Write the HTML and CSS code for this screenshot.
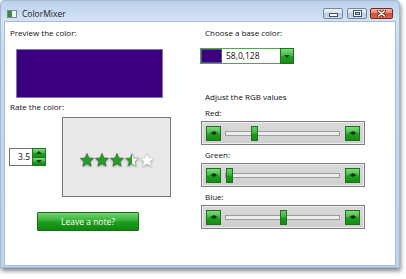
FILE: index.html
```html
<!DOCTYPE html>
<html>
<head>
<meta charset="utf-8">
<title>ColorMixer</title>
<link rel="stylesheet" href="styles.css">
</head>
<body>
<div class="window">
  <div class="titlebar">
    <svg class="app-icon" width="10" height="8" viewBox="0 0 10 8">
      <rect x="0" y="0" width="10" height="8" fill="#7d8896"/>
      <rect x="1" y="1" width="4" height="6" fill="#2f8f3c"/>
      <rect x="5" y="1" width="4" height="6" fill="#f4f6f8"/>
    </svg>
    <span class="title">ColorMixer</span>
    <div class="caption-buttons">
      <div class="cap cap-min"><span class="glyph-min"></span></div>
      <div class="cap cap-max"><span class="glyph-max"></span></div>
      <div class="cap cap-close">
        <svg width="9" height="7" viewBox="0 0 9 7">
          <path d="M1.5 1 L7.5 6 M7.5 1 L1.5 6" stroke="#5a2018" stroke-width="3" stroke-linecap="round"/>
          <path d="M1.5 1 L7.5 6 M7.5 1 L1.5 6" stroke="#ffffff" stroke-width="1.6" stroke-linecap="round"/>
        </svg>
      </div>
    </div>
  </div>
  <div class="client">
    <div class="col col-left">
      <div class="label">Preview the color:</div>
      <div class="preview" style="background-color: rgb(58,0,128);"></div>
      <div class="label label-rate">Rate the color:</div>
      <div class="rating-row">
        <div class="spin">
          <div class="spin-text">3.5</div>
          <div class="spin-btns">
            <div class="gbtn spin-btn"><span class="tri-up"></span></div>
            <div class="gbtn spin-btn"><span class="tri-down"></span></div>
          </div>
        </div>
        <div class="rating">
          <svg class="star" width="14" height="14" viewBox="0 0 14 14"><polygon class="star-full" points="7,0.5 8.85,4.95 13.66,5.34 10,8.5 11.11,13.16 7,10.65 2.89,13.16 4,8.5 0.34,5.34 5.15,4.95"/></svg>
          <svg class="star" width="14" height="14" viewBox="0 0 14 14"><polygon class="star-full" points="7,0.5 8.85,4.95 13.66,5.34 10,8.5 11.11,13.16 7,10.65 2.89,13.16 4,8.5 0.34,5.34 5.15,4.95"/></svg>
          <svg class="star" width="14" height="14" viewBox="0 0 14 14"><polygon class="star-full" points="7,0.5 8.85,4.95 13.66,5.34 10,8.5 11.11,13.16 7,10.65 2.89,13.16 4,8.5 0.34,5.34 5.15,4.95"/></svg>
          <svg class="star" width="14" height="14" viewBox="0 0 14 14">
            <defs>
              <linearGradient id="half" x1="0" y1="0" x2="1" y2="0">
                <stop offset="0.5" stop-color="#2b9b2b"/>
                <stop offset="0.5" stop-color="#ffffff"/>
              </linearGradient>
            </defs>
            <polygon class="star-half" fill="url(#half)" points="7,0.5 8.85,4.95 13.66,5.34 10,8.5 11.11,13.16 7,10.65 2.89,13.16 4,8.5 0.34,5.34 5.15,4.95"/>
          </svg>
          <svg class="star" width="14" height="14" viewBox="0 0 14 14"><polygon class="star-empty" points="7,0.5 8.85,4.95 13.66,5.34 10,8.5 11.11,13.16 7,10.65 2.89,13.16 4,8.5 0.34,5.34 5.15,4.95"/></svg>
        </div>
      </div>
      <div class="note-btn">Leave a note?</div>
    </div>
    <div class="col col-right">
      <div class="label label-r">Choose a base color:</div>
      <div class="combo">
        <div class="swatch" style="background-color: rgb(58,0,128);"></div>
        <div class="combo-text">58,0,128</div>
        <div class="gbtn combo-btn"><span class="tri-down"></span></div>
      </div>
      <div class="label label-r label-adjust">Adjust the RGB values</div>
      <div class="slider-group">
        <div class="label label-r">Red:</div>
        <div class="slider">
          <div class="gbtn rb"><svg width="8" height="4" viewBox="0 0 8 4"><path d="M0 2 H8" stroke="#1c3f1c" stroke-width="0.8"/><ellipse cx="4" cy="2" rx="2.2" ry="1.7" fill="#132a13"/></svg></div>
          <div class="track"><div class="thumb" style="left: 24.6px;"></div></div>
          <div class="gbtn rb"><svg width="8" height="4" viewBox="0 0 8 4"><path d="M0 2 H8" stroke="#1c3f1c" stroke-width="0.8"/><ellipse cx="4" cy="2" rx="2.2" ry="1.7" fill="#132a13"/></svg></div>
        </div>
      </div>
      <div class="slider-group">
        <div class="label label-r">Green:</div>
        <div class="slider">
          <div class="gbtn rb"><svg width="8" height="4" viewBox="0 0 8 4"><path d="M0 2 H8" stroke="#1c3f1c" stroke-width="0.8"/><ellipse cx="4" cy="2" rx="2.2" ry="1.7" fill="#132a13"/></svg></div>
          <div class="track"><div class="thumb" style="left: 0px;"></div></div>
          <div class="gbtn rb"><svg width="8" height="4" viewBox="0 0 8 4"><path d="M0 2 H8" stroke="#1c3f1c" stroke-width="0.8"/><ellipse cx="4" cy="2" rx="2.2" ry="1.7" fill="#132a13"/></svg></div>
        </div>
      </div>
      <div class="slider-group">
        <div class="label label-r">Blue:</div>
        <div class="slider">
          <div class="gbtn rb"><svg width="8" height="4" viewBox="0 0 8 4"><path d="M0 2 H8" stroke="#1c3f1c" stroke-width="0.8"/><ellipse cx="4" cy="2" rx="2.2" ry="1.7" fill="#132a13"/></svg></div>
          <div class="track"><div class="thumb" style="left: 54.2px;"></div></div>
          <div class="gbtn rb"><svg width="8" height="4" viewBox="0 0 8 4"><path d="M0 2 H8" stroke="#1c3f1c" stroke-width="0.8"/><ellipse cx="4" cy="2" rx="2.2" ry="1.7" fill="#132a13"/></svg></div>
        </div>
      </div>
    </div>
  </div>
</div>
</body>
</html>
```
FILE: styles.css
```css
html, body {
  margin: 0;
  padding: 0;
  background: #ffffff;
}

body {
  font-family: "Open Sans", "Noto Sans", sans-serif;
  font-size: 8px;
  color: #0e0e0e;
  width: 406px;
  height: 279px;
  overflow: hidden;
}

.window {
  width: 400px;
  height: 268px;
  display: flex;
  flex-direction: column;
  background: linear-gradient(180deg, #b9cfe9 0px, #d4e3f4 20px, #c6d9ef 60px, #bfd3eb 100%);
  border-radius: 5px 5px 0 0;
  box-shadow: 1px 3px 4px rgba(50, 55, 65, 0.6), inset 0 0 0 1px #a3b8d2;
}

.titlebar {
  height: 22px;
  box-sizing: border-box;
  padding: 5px 7px 0 7px;
  display: flex;
  align-items: center;
}

.app-icon {
  display: block;
  margin-right: 5px;
}

.title {
  flex: 1;
  font-size: 8.5px;
  color: #14202e;
}

.caption-buttons {
  display: flex;
}

.cap {
  height: 11px;
  box-sizing: border-box;
  border: 1px solid #7186a3;
  border-radius: 2px;
  display: flex;
  align-items: center;
  justify-content: center;
  background: linear-gradient(180deg, #eef3f9 0%, #d7e2ee 45%, #b9cadf 52%, #cddbec 100%);
}

.cap-min {
  width: 20px;
}

.cap-max {
  width: 20px;
  margin-left: 4px;
}

.cap-close {
  width: 23px;
  margin-left: 3px;
  border-color: #6f2b20;
  background: linear-gradient(180deg, #eeb6a8 0%, #dd8572 45%, #c84a32 52%, #d96a50 100%);
}

.glyph-min {
  width: 7px;
  height: 2px;
  margin-top: 3px;
  background: #ffffff;
  box-shadow: 0 0 0 1px #3f526b;
}

.glyph-max {
  width: 5px;
  height: 3px;
  border: 1px solid #ffffff;
  box-shadow: 0 0 0 1px #3f526b, inset 0 0 0 1px #3f526b;
}

.client {
  flex: 1;
  margin: 0 5px 3px 5px;
  background: #ffffff;
  box-shadow: 0 0 0 1px #a7bcd6;
  display: flex;
}

.col {
  display: flex;
  flex-direction: column;
  align-items: flex-start;
  padding-top: 5px;
}

.col-left {
  width: 190px;
}

.col-right {
  width: 200px;
}

.label {
  height: 12px;
  line-height: 12px;
  padding-left: 5px;
  white-space: nowrap;
}

.label-r {
  padding-left: 10px;
}

.preview {
  margin: 10px 0 0 11px;
  width: 147px;
  height: 49px;
  box-sizing: border-box;
  border: 1px solid #8577a6;
}

.label-rate {
  margin-top: 3px;
}

.rating-row {
  margin-top: 4px;
  display: flex;
  align-items: center;
}

.spin {
  margin-left: 4px;
  display: flex;
  height: 18px;
}

.spin-text {
  width: 23px;
  box-sizing: border-box;
  border: 1px solid #6f6f6f;
  border-right: none;
  background: #ffffff;
  text-align: right;
  padding-right: 2px;
  line-height: 16px;
  font-size: 8.5px;
}

.spin-btns {
  width: 14px;
  display: flex;
  flex-direction: column;
}

.gbtn {
  box-sizing: border-box;
  border: 1px solid #226e22;
  background: linear-gradient(180deg, #7edc7e 0%, #45bb45 45%, #1ea21e 55%, #138d13 100%);
  display: flex;
  align-items: center;
  justify-content: center;
}

.spin-btn {
  flex: 1;
}

.spin-btn + .spin-btn {
  border-top: none;
}

.tri-up {
  width: 0;
  height: 0;
  border-left: 3px solid transparent;
  border-right: 3px solid transparent;
  border-bottom: 3px solid #1d3a1d;
}

.tri-down {
  width: 0;
  height: 0;
  border-left: 3px solid transparent;
  border-right: 3px solid transparent;
  border-top: 3px solid #1d3a1d;
}

.rating {
  margin-left: 16px;
  width: 109px;
  height: 80px;
  box-sizing: border-box;
  border: 1px solid #767676;
  background: #e9e9e9;
  display: flex;
  align-items: center;
  justify-content: center;
  gap: 1px;
  padding-top: 5px;
}

.star {
  display: block;
  filter: drop-shadow(0 1px 1px rgba(0, 0, 0, 0.3));
}

.star-full {
  fill: #2b9b2b;
  stroke: #1a6a1a;
  stroke-width: 0.6;
  stroke-linejoin: round;
}

.star-half {
  stroke: #4b8a4b;
  stroke-width: 0.5;
  stroke-linejoin: round;
}

.star-empty {
  fill: #ffffff;
  stroke: #d0d0d0;
  stroke-width: 0.5;
  stroke-linejoin: round;
}

.note-btn {
  margin: 15px 0 0 32px;
  width: 102px;
  height: 19px;
  box-sizing: border-box;
  border: 1px solid #1b6a1b;
  border-radius: 1px;
  background: linear-gradient(180deg, #6fd46f 0%, #3fb53f 40%, #1c9e1c 55%, #0e860e 100%);
  color: #ffffff;
  font-size: 8.5px;
  line-height: 17px;
  text-align: center;
}

.combo {
  margin: 9px 0 0 5px;
  width: 94px;
  height: 16px;
  box-sizing: border-box;
  border: 1px solid #58a058;
  background: #ffffff;
  display: flex;
}

.swatch {
  width: 21px;
  height: 14px;
  box-sizing: border-box;
  border: 1px solid #5a4a8a;
}

.combo-text {
  flex: 1;
  padding-left: 4px;
  line-height: 14px;
  font-size: 8.5px;
}

.combo-btn {
  width: 14px;
  height: 16px;
  margin: -1px -1px 0 0;
}

.label-adjust {
  margin-top: 27px;
}

.slider-group {
  margin-top: 4px;
  display: flex;
  flex-direction: column;
  align-items: flex-start;
}

.slider {
  margin: 2px 0 0 6px;
  width: 164px;
  height: 24px;
  box-sizing: border-box;
  border: 1px solid #7e7e7e;
  background: linear-gradient(180deg, #dadada 0%, #cfcfcf 100%);
  box-shadow: inset 0 0 0 1px #ececec;
  display: flex;
  align-items: center;
  padding: 0 4px;
}

.rb {
  width: 15px;
  height: 15px;
}

.track {
  flex: 1;
  margin: 0 5px 0 4px;
  height: 5px;
  box-sizing: border-box;
  border: 1px solid #9c9c9c;
  background: #ececec;
  position: relative;
}

.thumb {
  position: absolute;
  top: -6px;
  width: 7px;
  height: 15px;
  box-sizing: border-box;
  border: 1px solid #236e23;
  background: linear-gradient(180deg, #66cc66 0%, #3db43d 48%, #1b9a1b 52%, #128a12 100%);
}
```
